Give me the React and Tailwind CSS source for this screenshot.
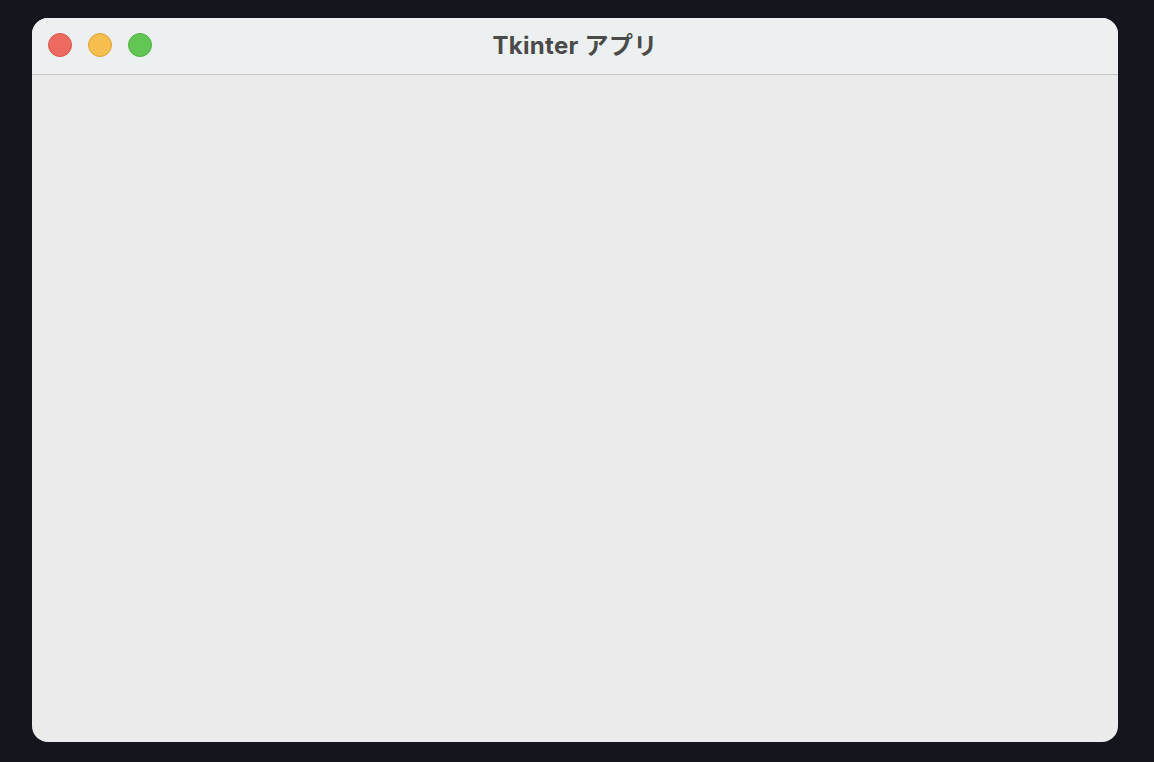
export default function App() {
  return (
    <div className="w-[1154px] h-[762px] bg-[#15151d] pt-[18px] pl-[32px]">
      <div className="w-[1086px] h-[724px] rounded-[16px] overflow-hidden bg-[#ebebeb] flex flex-col">
        <div className="relative h-[57px] shrink-0 bg-[#edf0f0] border-b border-[#c4c6c8] flex items-center justify-center">
          <div className="absolute left-[16px] top-[15px] flex gap-[16px]">
            <span className="w-[24px] h-[24px] rounded-full bg-[#ee695e] border border-[#d5574c]" />
            <span className="w-[24px] h-[24px] rounded-full bg-[#f6be4f] border border-[#dca23c]" />
            <span className="w-[24px] h-[24px] rounded-full bg-[#62c655] border border-[#4fae43]" />
          </div>
          <span className="text-[24px] font-bold text-[#4a4a4a] tracking-[0.3px]" style={{ fontFamily: 'Inter, "Noto Sans CJK JP", sans-serif' }}>
            Tkinter アプリ
          </span>
        </div>
        <div className="flex-1" />
      </div>
    </div>
  );
}
